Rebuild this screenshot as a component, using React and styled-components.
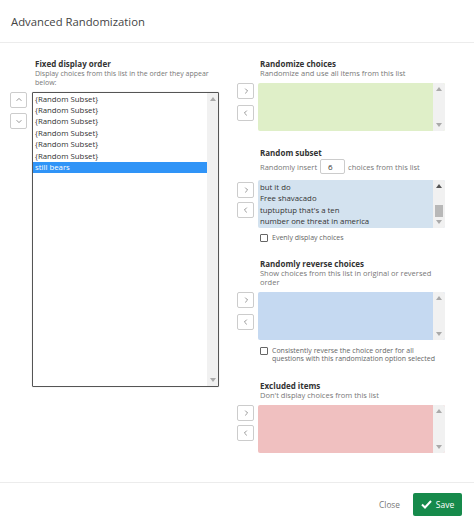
import styled, { createGlobalStyle } from "styled-components";

const GlobalStyle = createGlobalStyle`
  html, body {
    margin: 0;
    padding: 0;
    background: #fff;
  }
  body {
    font-family: "Open Sans", "DejaVu Sans", sans-serif;
    color: #333;
  }
`;

const fixedItems = [
  "{Random Subset}",
  "{Random Subset}",
  "{Random Subset}",
  "{Random Subset}",
  "{Random Subset}",
  "{Random Subset}",
];

const subsetItems = [
  "but it do",
  "Free shavacado",
  "tuptuptup that's a ten",
  "number one threat in america",
];

const Chevron = ({ dir }) => {
  const paths = {
    up: "M2 6 L5 3 L8 6",
    down: "M2 4 L5 7 L8 4",
    right: "M4 2 L7 5 L4 8",
    left: "M6 2 L3 5 L6 8",
  };
  return (
    <svg width="8" height="8" viewBox="0 0 10 10">
      <path d={paths[dir]} fill="none" stroke="#888" strokeWidth="1.1" />
    </svg>
  );
};

const Tri = ({ up, dark }) => (
  <svg width="6" height="4" viewBox="0 0 6 4">
    <path d={up ? "M0 4 L3 0 L6 4 Z" : "M0 0 L3 4 L6 0 Z"} fill={dark ? "#555" : "#aaa"} />
  </svg>
);

const MoveButtons = ({ gap, mt }) => (
  <Buttons $gap={gap} $mt={mt}>
    <ArrowBtn><Chevron dir="right" /></ArrowBtn>
    <ArrowBtn><Chevron dir="left" /></ArrowBtn>
  </Buttons>
);

const App = () => {
  return (
    <>
      <GlobalStyle />
      <Page>
        <Header>Advanced Randomization</Header>
        <Body>
          <LeftCol>
            <Heading $indent={25}>
              <Title>Fixed display order</Title>
              <Desc $size={7}>Display choices from this list in the order they appear below:</Desc>
            </Heading>
            <Row $gap={5} $mt={5}>
              <Buttons $gap={5}>
                <ArrowBtn><Chevron dir="up" /></ArrowBtn>
                <ArrowBtn><Chevron dir="down" /></ArrowBtn>
              </Buttons>
              <FixedList>
                <Items>
                  {fixedItems.map((item, i) => (
                    <Item key={i}>{item}</Item>
                  ))}
                  <Item $selected>still bears</Item>
                </Items>
                <Scrollbar $w={11}>
                  <Tri up />
                  <Track />
                  <Tri />
                </Scrollbar>
              </FixedList>
            </Row>
          </LeftCol>

          <RightCol>
            <Section>
              <Heading $indent={23}>
                <Title>Randomize choices</Title>
                <Desc>Randomize and use all items from this list</Desc>
              </Heading>
              <Row $gap={4} $mt={5}>
                <MoveButtons gap={6} />
                <Box $bg="#dfefc8">
                  <Items />
                  <Scrollbar>
                    <Tri up />
                    <Track />
                    <Tri />
                  </Scrollbar>
                </Box>
              </Row>
            </Section>

            <Section $mt={16}>
              <Heading $indent={23}>
                <Title>Random subset</Title>
                <InsertLine>
                  Randomly insert <CountInput>6</CountInput> choices from this list
                </InsertLine>
              </Heading>
              <Row $gap={4} $mt={6}>
                <MoveButtons gap={4} mt={2} />
                <Box $bg="#d3e2ef">
                  <Items $pt={2}>
                    {subsetItems.map((item, i) => (
                      <Item key={i}>{item}</Item>
                    ))}
                  </Items>
                  <Scrollbar>
                    <Tri up dark />
                    <Track>
                      <Thumb />
                    </Track>
                    <Tri />
                  </Scrollbar>
                </Box>
              </Row>
              <CheckRow $mt={6}>
                <Check />
                <CheckText>Evenly display choices</CheckText>
              </CheckRow>
            </Section>

            <Section $mt={16}>
              <Heading $indent={23}>
                <Title>Randomly reverse choices</Title>
                <Desc>Show choices from this list in original or reversed order</Desc>
              </Heading>
              <Row $gap={4} $mt={4.5}>
                <MoveButtons gap={6} />
                <Box $bg="#c5d9f1">
                  <Items />
                  <Scrollbar>
                    <Tri up />
                    <Track />
                    <Tri />
                  </Scrollbar>
                </Box>
              </Row>
              <CheckRow $mt={7}>
                <Check />
                <CheckText>
                  Consistently reverse the choice order for all questions with this
                  randomization option selected
                </CheckText>
              </CheckRow>
            </Section>

            <Section $mt={17}>
              <Heading $indent={23}>
                <Title>Excluded items</Title>
                <Desc>Don't display choices from this list</Desc>
              </Heading>
              <Row $gap={4} $mt={5}>
                <MoveButtons gap={4} />
                <Box $bg="#f0c0c0">
                  <Items />
                  <Scrollbar>
                    <Tri up />
                    <Track />
                    <Tri />
                  </Scrollbar>
                </Box>
              </Row>
            </Section>
          </RightCol>
        </Body>
        <Footer>
          <CloseBtn>Close</CloseBtn>
          <SaveBtn>
            <svg width="11" height="9" viewBox="0 0 11 9">
              <path d="M1 4.5 L4 7.5 L10 1" fill="none" stroke="#fff" strokeWidth="2" />
            </svg>
            Save
          </SaveBtn>
        </Footer>
      </Page>
    </>
  );
};

const Page = styled.div`
  width: 474px;
  height: 526px;
  display: flex;
  flex-direction: column;
  overflow: hidden;
`;

const Header = styled.div`
  height: 42px;
  padding-left: 11px;
  display: flex;
  align-items: center;
  font-size: 11.3px;
  color: #444;
  border-bottom: 1px solid #ececec;
  flex-shrink: 0;
`;

const Body = styled.div`
  flex: 1;
  display: flex;
  gap: 18px;
  padding: 14.5px 0 0 10px;
  border-bottom: 1px solid #ececec;
`;

const LeftCol = styled.div`
  display: flex;
  flex-direction: column;
  width: 209px;
`;

const RightCol = styled.div`
  display: flex;
  flex-direction: column;
  width: 208px;
`;

const Section = styled.div`
  display: flex;
  flex-direction: column;
  margin-top: ${(p) => p.$mt || 0}px;
`;

const Heading = styled.div`
  padding-left: ${(p) => p.$indent}px;
`;

const Title = styled.div`
  font-size: 8px;
  font-weight: 700;
  line-height: 11px;
  color: #333;
`;

const Desc = styled.div`
  font-size: ${(p) => p.$size || 7.5}px;
  line-height: 9px;
  color: #777;
`;

const InsertLine = styled.div`
  display: flex;
  align-items: center;
  gap: 3px;
  font-size: 7.5px;
  color: #777;
  height: 15px;
  margin-top: 1.5px;
`;

const CountInput = styled.span`
  width: 25px;
  height: 15px;
  box-sizing: border-box;
  border: 1px solid #ccc;
  border-radius: 2px;
  padding-left: 7px;
  display: flex;
  align-items: center;
  font-size: 8px;
  color: #333;
`;

const Row = styled.div`
  display: flex;
  gap: ${(p) => p.$gap}px;
  margin-top: ${(p) => p.$mt || 0}px;
`;

const Buttons = styled.div`
  display: flex;
  flex-direction: column;
  gap: ${(p) => p.$gap || 5}px;
  margin-top: ${(p) => p.$mt || 0}px;
`;

const ArrowBtn = styled.div`
  width: 17px;
  height: 16px;
  box-sizing: border-box;
  border: 1px solid #ccc;
  border-radius: 2px;
  background: #fff;
  display: flex;
  align-items: center;
  justify-content: center;
`;

const FixedList = styled.div`
  width: 187px;
  height: 295px;
  box-sizing: border-box;
  border: 1px solid #555;
  border-radius: 1px;
  box-shadow: 0 0 1px rgba(0, 0, 0, 0.3);
  display: flex;
  background: #fff;
`;

const Box = styled.div`
  width: 187px;
  height: 48px;
  box-sizing: border-box;
  border-radius: 2px;
  background: ${(p) => p.$bg};
  display: flex;
  overflow: hidden;
`;

const Items = styled.div`
  flex: 1;
  display: flex;
  flex-direction: column;
  padding-top: ${(p) => p.$pt || 1}px;
`;

const Item = styled.div`
  font-size: 7.8px;
  line-height: 11.4px;
  padding-left: 2px;
  color: ${(p) => (p.$selected ? "#fff" : "#333")};
  background: ${(p) => (p.$selected ? "#3094f7" : "transparent")};
  white-space: nowrap;
`;

const Scrollbar = styled.div`
  width: ${(p) => p.$w || 12}px;
  background: #f1f1f1;
  display: flex;
  flex-direction: column;
  align-items: center;
  padding: 4px 0;
  box-sizing: border-box;
`;

const Track = styled.div`
  flex: 1;
  width: 100%;
  display: flex;
  flex-direction: column;
  justify-content: flex-end;
  align-items: center;
  padding-bottom: 3px;
`;

const Thumb = styled.div`
  width: 8px;
  height: 12px;
  background: #b8b8b8;
`;

const CheckRow = styled.div`
  display: flex;
  align-items: flex-start;
  gap: 4px;
  margin-top: ${(p) => p.$mt}px;
  padding-left: 23px;
`;

const Check = styled.div`
  width: 8px;
  height: 8px;
  flex-shrink: 0;
  box-sizing: border-box;
  border: 1px solid #666;
  border-radius: 1px;
  background: #fff;
`;

const CheckText = styled.div`
  font-size: 7px;
  line-height: 8px;
  color: #666;
  width: 165px;
`;

const Footer = styled.div`
  height: 43px;
  flex-shrink: 0;
  display: flex;
  align-items: center;
  justify-content: flex-end;
  gap: 13px;
  padding-right: 12px;
`;

const CloseBtn = styled.div`
  font-size: 8.3px;
  color: #777;
`;

const SaveBtn = styled.div`
  width: 49px;
  height: 23px;
  box-sizing: border-box;
  background: #168a4b;
  border-radius: 2px;
  color: #fff;
  font-size: 8.5px;
  display: flex;
  align-items: center;
  justify-content: center;
  gap: 4px;
`;

export default App;
